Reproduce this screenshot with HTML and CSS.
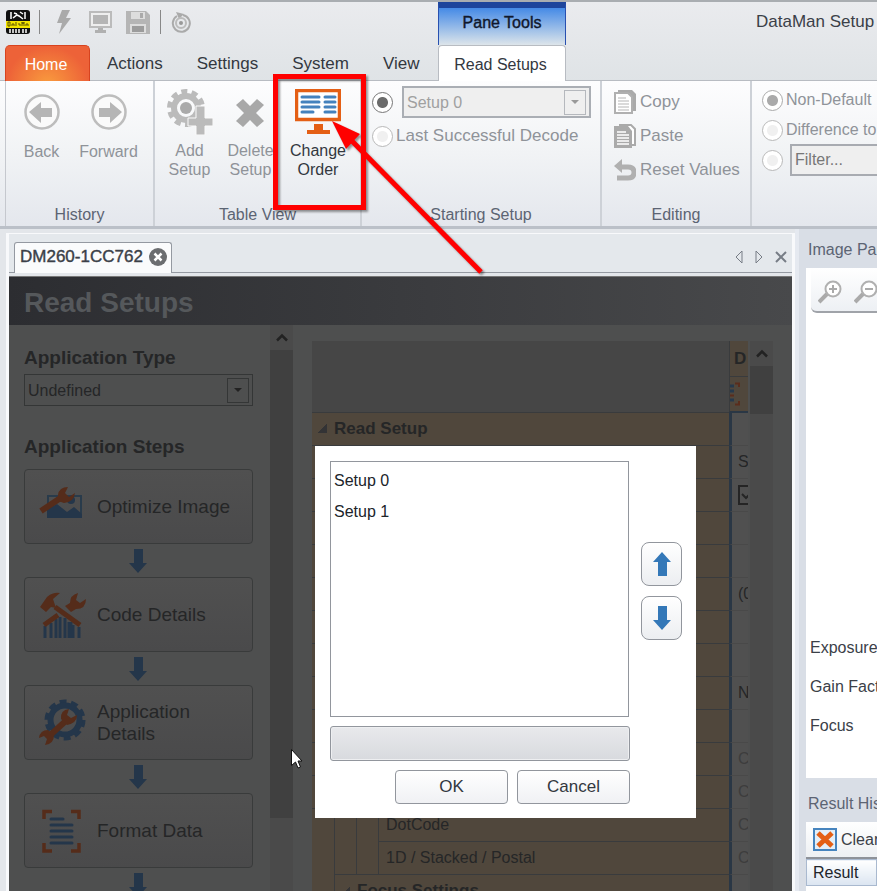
FILE: index.html
```html
<!DOCTYPE html>
<html lang="en">
<head>
    <meta charset="UTF-8">
    <meta name="viewport" content="width=device-width, initial-scale=1.0">
    <title>DataMan Setup</title>
    <link rel="stylesheet" href="styles.css">
</head>
<body>

    <header class="header">
        <div class="header-left">
            <div class="quick-bar">
                <svg class="logo" width="26" height="26" viewBox="0 0 26 26">
                    <rect x="1" y="1" width="24" height="24" rx="3" fill="#111"/>
                    <path d="M6 3v7M20 3v7" stroke="#fff" stroke-width="1.500"/>
                    <path d="M8 9l4-3 2 1 4 3M9 4l3 1M15 3l3 2" stroke="#fff" stroke-width="1.500" fill="none"/>
                    <rect x="1" y="12" width="24" height="7" fill="#f5e400"/>
                    <path d="M3 17v-4h2v4zM7 17v-2h2v2M11 13v4M13 15h2v2M17 17v-4l1 2 1-2v4M21 17v-2h2v2" stroke="#5a5200" fill="none"/>
                    <path d="M5 20v4M8 20v4M11 20v4M14 20v4M18 20v4M21 20v4" stroke="#fff" stroke-width="1.500"/>
                </svg>
                <span class="bar-line"></span>
                <svg class="icon-bolt" width="14" height="24" viewBox="0 0 14 24"><path d="M5 0h8l-4 8h5L2 24l3-11H0z" fill="#aaa"/></svg>
                <svg class="icon-screen" width="23" height="22" viewBox="0 0 23 22"><path d="M1 1h21v15H1z" fill="#eee" stroke="#bbb" stroke-width="2"/><path d="M4 4h15v9H4z" fill="#b5b5b5"/><path d="M9 17h5v2h3v3H6v-3h3z" fill="#b0b0b0"/></svg>
                <svg class="icon-save" width="24" height="23" viewBox="0 0 24 23"><path d="M0 0h20l4 4v19H0z" fill="#b5b5b5"/><path d="M5 1h14v7H5z" fill="#ddd"/><path d="M14 2h3v5h-3z" fill="#aaa"/><path d="M4 13h16v9H4z" fill="#ddd"/><path d="M6 15h12v6H6z" fill="#9c9c9c"/></svg>
                <span class="bar-line"></span>
                <svg class="icon-target" width="20" height="22" viewBox="0 0 20 22"><path d="M6 5a8.500 8.500 0 1 0 6-1" fill="none" stroke="#aaa" stroke-width="2"/><path d="M5 1l8 2-5 5z" fill="#aaa"/><circle cx="10" cy="12" r="5" fill="none" stroke="#bbb" stroke-width="2"/><circle cx="10" cy="12" r="2" fill="#999"/></svg>
            </div>
            <nav class="tabs">
                <a href="#" class="tab home">Home</a>
                <a href="#" class="tab">Actions</a>
                <a href="#" class="tab">Settings</a>
                <a href="#" class="tab">System</a>
                <a href="#" class="tab">View</a>
            </nav>
        </div>
        <div class="context">
            <div class="context-title">Pane Tools</div>
            <a href="#" class="tab active">Read Setups</a>
        </div>
        <div class="app-title">DataMan Setup</div>
    </header>

    <section class="ribbon">
        <div class="group history">
            <div class="group-body">
                <button class="big" disabled>
                    <svg width="36" height="36" viewBox="0 0 36 36"><circle cx="18" cy="18" r="16.500" fill="#fafafa" stroke="#bdbdbd" stroke-width="2.500"/><path d="M5 18L17 8v6h11v9H17v6z" fill="#b5b5b5"/></svg>
                    <span>Back</span>
                </button>
                <button class="big" disabled>
                    <svg width="36" height="36" viewBox="0 0 36 36"><circle cx="18" cy="18" r="16.500" fill="#fafafa" stroke="#bdbdbd" stroke-width="2.500"/><path d="M31 18L19 8v6H8v9h11v6z" fill="#b5b5b5"/></svg>
                    <span>Forward</span>
                </button>
            </div>
            <div class="group-name">History</div>
        </div>
        <div class="group table-view">
            <div class="group-body">
                <button class="big" disabled>
                    <svg width="46" height="46" viewBox="0 0 46 46"><circle cx="19" cy="19" r="16.500" fill="none" stroke="#bbb" stroke-width="5" stroke-dasharray="6 4.370"/><circle cx="19" cy="19" r="12" fill="none" stroke="#bbb" stroke-width="6"/><circle cx="19" cy="19" r="6" fill="#aaa"/><path d="M29 17h9v12h8v8h-8v9h-9v-9h-8v-8h8z" fill="#bbb" stroke="#fafafa"/></svg>
                    <span>Add<br>Setup</span>
                </button>
                <button class="big" disabled>
                    <svg width="46" height="46" viewBox="0 0 46 46"><path d="M15 10l7 7 7-7 7 6-8 8 8 8-7 6-7-7-7 7-7-6 8-8-8-8z" fill="#a8a8a8"/></svg>
                    <span>Delete<br>Setup</span>
                </button>
                <button class="big order">
                    <svg width="46" height="46" viewBox="0 0 46 46"><path d="M1.500 1.500h43v29h-43z" fill="#fff" stroke="#e45f15" stroke-width="3.500"/><path d="M19 35h9v6h7v4H12v-4h7z" fill="#e45f15"/><path d="M7 8h17M7 13h17M7 18h17M7 23h11M30 8h10M30 13h10M30 18h10M30 23h10" stroke="#4482bd" stroke-width="3" stroke-linecap="round"/></svg>
                    <span>Change<br>Order</span>
                </button>
            </div>
            <div class="group-name">Table View</div>
        </div>
        <div class="group starting">
            <div class="group-body">
                <div class="line">
                    <input type="radio" name="start" id="start-setup" aria-label="Setup" checked>
                    <span class="combo">
                        <select aria-label="Starting setup" disabled><option>Setup 0</option></select>
                        <i class="combo-arrow"></i>
                    </span>
                </div>
                <div class="line">
                    <input type="radio" name="start" id="start-last" disabled>
                    <label for="start-last">Last Successful Decode</label>
                </div>
            </div>
            <div class="group-name">Starting Setup</div>
        </div>
        <div class="group editing">
            <div class="group-body">
                <button class="small" disabled>
                    <svg width="22" height="24" viewBox="0 0 22 24"><path d="M4 0h14l4 4v17h-4V7l-3-4H4z" fill="#aaa"/><path d="M1 3h13l4 4v16H1z" fill="#fff" stroke="#b0b0b0" stroke-width="2"/><path d="M4 8h8M4 11h11M4 14h11M4 17h11M4 20h11" stroke="#b5b5b5"/></svg>
                    Copy
                </button>
                <button class="small" disabled>
                    <svg width="22" height="24" viewBox="0 0 22 24"><path d="M5 1h12l4 4v16h-3" fill="#fff" stroke="#aaa" stroke-width="2"/><path d="M0 2h14l4 5v17H0z" fill="#aaa"/><path d="M3 8h9M3 11h12M3 14h12M3 17h12M3 20h12" stroke="#fff" stroke-width="1.500"/></svg>
                    Paste
                </button>
                <button class="small" disabled>
                    <svg width="22" height="24" viewBox="0 0 22 24"><path d="M3 20h11q6 0 6-5.500T14 9H6" fill="none" stroke="#b0b0b0" stroke-width="5"/><path d="M0 8l8-7v14z" fill="#b0b0b0"/></svg>
                    Reset Values
                </button>
            </div>
            <div class="group-name">Editing</div>
        </div>
        <div class="group filter">
            <div class="group-body">
                <div class="line">
                    <input type="radio" name="filter" id="non-default" checked disabled>
                    <label for="non-default">Non-Default</label>
                </div>
                <div class="line">
                    <input type="radio" name="filter" id="difference" disabled>
                    <label for="difference">Difference to</label>
                </div>
                <div class="line">
                    <input type="radio" name="filter" id="by-text" aria-label="Filter by text" disabled>
                    <input type="text" class="filter-text" value="Filter..." aria-label="Filter">
                </div>
            </div>
        </div>
    </section>

    <main class="workspace">
        <section class="pane">
            <div class="doc-tabs">
                <div class="doc-tab">DM260-1CC762
                    <button class="tab-close" aria-label="Close tab"><svg width="18" height="18" viewBox="0 0 18 18"><circle cx="9" cy="9" r="9" fill="#6b6d70"/><path d="M5.500 5.500l7 7M12.500 5.500l-7 7" stroke="#fff" stroke-width="2.500"/></svg></button>
                </div>
                <div class="doc-tools">
                    <button aria-label="Previous"><svg width="8" height="14" viewBox="0 0 8 14"><path d="M7 1v12L1 7z" fill="none" stroke="#777d86"/></svg></button>
                    <button aria-label="Next"><svg width="8" height="14" viewBox="0 0 8 14"><path d="M1 1v12l6-6z" fill="none" stroke="#777d86"/></svg></button>
                    <button aria-label="Close"><svg width="12" height="12" viewBox="0 0 12 12"><path d="M1 1l10 10M11 1L1 11" stroke="#777d86" stroke-width="2"/></svg></button>
                </div>
            </div>
            <div class="doc">
                <h1>Read Setups</h1>
                <div class="doc-body">
                    <aside class="steps">
                        <label class="heading" for="app-type">Application Type</label>
                        <span class="combo dark">
                            <select id="app-type"><option>Undefined</option></select>
                            <i class="combo-arrow"></i>
                        </span>
                        <h2 class="heading">Application Steps</h2>
                        <button class="step">
                            <svg width="48" height="48" viewBox="0 0 48 48"><path d="M9 32V13h33v20H9z" fill="none" stroke="#293b4b" stroke-width="2"/><path d="M8 35v-9l10-5 10 8 7-5 8 7v4z" fill="#24364a"/><circle cx="32" cy="17" r="4" fill="#24364a"/><path d="M2 28L26 12" stroke="#552c1a" stroke-width="6"/><path d="M19 12q1-8 10-8l-3 6 4 4 6-4q-1 9-11 10l-6-2z" fill="#552c1a"/></svg>
                            <span>Optimize Image</span>
                        </button>
                        <svg class="down" width="18" height="24" viewBox="0 0 18 24"><path d="M5 0h9v14h4l-9 10-9-10h5z"/></svg>
                        <button class="step">
                            <svg width="48" height="48" viewBox="0 0 48 48"><path d="M6 35v12M12 32v15M17 28v19M21 26v21M26 27v20M32 31v16M40 36v11" stroke="#24364a" stroke-width="3"/><path d="M30 31v16M34 34v13" stroke="#24364a" stroke-width="3"/><path d="M5 34l14-10M31 16l4-4M16 16l25 18" stroke="#552c1a" stroke-width="5"/><path d="M1 16L8 6q6-5 13-4l-7 6 3 9-5-1-5 5zM26 15l5-3q0-8 8-10l-2 7 4 3 6-4q0 10-10 10l-5 3z" fill="#552c1a"/></svg>
                            <span>Code Details</span>
                        </button>
                        <svg class="down" width="18" height="24" viewBox="0 0 18 24"><path d="M5 0h9v14h4l-9 10-9-10h5z"/></svg>
                        <button class="step">
                            <svg width="48" height="48" viewBox="0 0 48 48"><circle cx="26" cy="21" r="18.500" fill="none" stroke="#24364a" stroke-width="4" stroke-dasharray="7 4.600"/><circle cx="26" cy="21" r="14.500" fill="none" stroke="#24364a" stroke-width="6"/><path d="M8 39l22-20" stroke="#552c1a" stroke-width="6"/><path d="M22 20q-1-9 8-10l-2 6 4 3 6-3q0 8-10 10zM15 36q0 9-9 10l2-6-3-3-5 2q1-8 9-8z" fill="#552c1a"/></svg>
                            <span>Application Details</span>
                        </button>
                        <svg class="down" width="18" height="24" viewBox="0 0 18 24"><path d="M5 0h9v14h4l-9 10-9-10h5z"/></svg>
                        <button class="step">
                            <svg width="48" height="48" viewBox="0 0 48 48"><path d="M5 12V4.500h8M32 4.500h8V12M5 36v8h8M32 44h8v-8" fill="none" stroke="#552c1a" stroke-width="3.500"/><path d="M12 12h12M12 18h21M12 24h21M12 30h21M12 36h21" stroke="#24364a" stroke-width="3" stroke-linecap="round"/></svg>
                            <span>Format Data</span>
                        </button>
                        <svg class="down" width="18" height="24" viewBox="0 0 18 24"><path d="M5 0h9v14h4l-9 10-9-10h5z"/></svg>
                    </aside>
                    <div class="scroll">
                        <svg width="14" height="9" viewBox="0 0 14 9"><path d="M2 7.500l5-5 5 5" fill="none" stroke="#222" stroke-width="2.500"/></svg>
                        <div class="thumb"></div>
                    </div>
                    <div class="grid-area">
                        <table class="grid">
                            <colgroup><col class="indent"><col class="indent"><col class="indent"><col><col class="value"></colgroup>
                            <tr class="top"><td colspan="4" rowspan="2" class="corner"></td><th class="device">D</th></tr>
                            <tr class="top"><th class="device"><svg width="12" height="24" viewBox="0 0 12 24"><path d="M0 4h4M0 9h4M0 18h4" stroke="#26394c" stroke-width="3"/><path d="M0 13.500h4M5 1.500h4V5M5 22.500h4V19" fill="none" stroke="#5a2d1c" stroke-width="2"/></svg></th></tr>
                            <tr><th colspan="4"><i class="tree"></i>Read Setup</th><td></td></tr>
                            <tr><td colspan="4"></td><td>S</td></tr>
                            <tr><td colspan="4"></td><td><svg width="20" height="20" viewBox="0 0 20 20"><path d="M1 1h18v18H1zM4 9l4 4 5-5" fill="none" stroke="#252525" stroke-width="2"/></svg></td></tr>
                            <tr><td colspan="4"></td><td></td></tr>
                            <tr><td colspan="4"></td><td></td></tr>
                            <tr><td colspan="4"></td><td>(0</td></tr>
                            <tr><td colspan="4"></td><td></td></tr>
                            <tr><td colspan="4"></td><td></td></tr>
                            <tr><td colspan="4"></td><td>N</td></tr>
                            <tr><td colspan="4"></td><td></td></tr>
                            <tr><td colspan="4"></td><td class="dim">C</td></tr>
                            <tr><td colspan="4"></td><td class="dim">C</td></tr>
                            <tr class="leaf"><td></td><td></td><td></td><td>DotCode</td><td class="dim">C</td></tr>
                            <tr class="leaf last"><td></td><td></td><td></td><td>1D / Stacked / Postal</td><td class="dim">C</td></tr>
                            <tr><td></td><th colspan="3" class="sub"><i class="tree"></i>Focus Settings</th><td></td></tr>
                        </table>
                        <div class="scroll short">
                            <svg width="14" height="9" viewBox="0 0 14 9"><path d="M2 7.500l5-5 5 5" fill="none" stroke="#222" stroke-width="2.500"/></svg>
                            <div class="thumb"></div>
                        </div>
                    </div>
                </div>

                <div class="dialog" role="dialog" aria-label="Change Order">
                    <div class="dialog-main">
                        <select class="setup-list" size="2" aria-label="Setups">
                            <option>Setup 0</option>
                            <option>Setup 1</option>
                        </select>
                        <div class="move">
                            <button aria-label="Move up"><svg width="18" height="24" viewBox="0 0 18 24"><path d="M5 24h9V10h4L9 0 0 10h5z" fill="#3478b8"/></svg></button>
                            <button aria-label="Move down"><svg width="18" height="24" viewBox="0 0 18 24"><path d="M5 0h9v14h4L9 24 0 14h5z" fill="#3478b8"/></svg></button>
                        </div>
                    </div>
                    <input type="text" class="setup-name" aria-label="Setup name" disabled>
                    <div class="dialog-buttons">
                        <button>OK</button>
                        <button>Cancel</button>
                    </div>
                </div>
            </div>
        </section>

        <aside class="side">
            <h3>Image Pane</h3>
            <div class="image-box">
                <div class="zoom-bar">
                    <button aria-label="Zoom in"><svg width="24" height="24" viewBox="0 0 24 24"><path d="M1 22l8-8" stroke="#aaa" stroke-width="4"/><circle cx="15" cy="9" r="7.500" fill="#fff" stroke="#b0b0b0" stroke-width="2"/><path d="M11 9h8M15 5v8" stroke="#aaa" stroke-width="2"/></svg></button>
                    <button aria-label="Zoom out"><svg width="24" height="24" viewBox="0 0 24 24"><path d="M1 22l8-8" stroke="#aaa" stroke-width="4"/><circle cx="15" cy="9" r="7.500" fill="#fff" stroke="#b0b0b0" stroke-width="2"/><path d="M11 9h8" stroke="#aaa" stroke-width="2"/></svg></button>
                </div>
                <div class="image-info">
                    <p>Exposure</p>
                    <p>Gain Factor</p>
                    <p>Focus</p>
                </div>
            </div>
            <h3>Result History</h3>
            <div class="result-box">
                <button class="clear"><svg width="24" height="23" viewBox="0 0 24 23"><path d="M1 1h22v21H1z" fill="#e4eef7" stroke="#4684be" stroke-width="2"/><path d="M5 5l14 13M19 5L5 18" stroke="#e45f15" stroke-width="5"/></svg>Clear</button>
                <table class="results"><tr><th>Result</th></tr></table>
            </div>
        </aside>
    </main>

    <svg class="mark" width="490" height="280" viewBox="0 0 490 280">
        <g class="mark-shapes">
            <rect x="275.500" y="76.500" width="88" height="131" fill="none" stroke="#f00" stroke-width="5"/>
            <path d="M350 139L481 272" stroke="#f00" stroke-width="5"/>
            <path d="M332 121l28 13-14 15z" fill="#f00"/>
        </g>
    </svg>
    <svg class="cursor" width="12" height="20" viewBox="0 0 12 20"><path d="M.5.500v16l4-3.500 2.500 6 2.500-1-2.500-6H11z" fill="#fff" stroke="#111"/></svg>

</body>
</html>
```
FILE: styles.css
```css
* {
    box-sizing: border-box;
}
body {
    margin: 0;
    height: 100vh;
    display: flex;
    flex-direction: column;
    overflow: hidden;
    position: relative;
    font: 16px "Liberation Sans", Arial, sans-serif;
    color: #3b4048;
    background: #e3e6ea;
}
button, select, input {
    font: inherit;
    color: inherit;
}
button {
    padding: 0;
    border: 0;
    background: none;
}
svg {
    flex: none;
}

/* title bar and tabs */
.header {
    display: flex;
    height: 81px;
    flex: none;
    border-top: 2px solid #a9adb1;
    background: linear-gradient(#eaebee, #dfe3e6);
}
.header-left, .context {
    display: flex;
    flex-direction: column;
    flex: none;
}
.header-left {
    width: 438px;
}
.quick-bar {
    display: flex;
    align-items: center;
    height: 43px;
    padding: 0 5px 3px;
}
.bar-line {
    width: 1px;
    height: 24px;
    background: #888;
    margin: 0 8px;
}
.icon-bolt {
    margin: 0 18px 0 9px;
}
.icon-save {
    margin: 0 2px 0 14px;
}
.icon-target {
    margin-left: 2px;
}
.tabs {
    display: flex;
    height: 36px;
    padding-left: 5px;
    border-bottom: 1px solid #b8bcc2;
}
.tab {
    height: 36px;
    padding: 0 17px;
    line-height: 37px;
    font-size: 17px;
    color: #33383f;
    text-decoration: none;
}
.tab.home {
    width: 85px;
    padding: 0 3px 0 0;
    text-align: center;
    font-size: 16px;
    color: #fff;
    border: 1px solid #d7431f;
    border-bottom: 0;
    border-radius: 5px 5px 0 0;
    background: radial-gradient(ellipse at 50% 110%, #f99c3e, #ed6238 70%);
}
.context {
    width: 128px;
}
.context-title {
    height: 43px;
    text-align: center;
    line-height: 30px;
    color: #10182c;
    -webkit-text-stroke: 0.4px #10182c;
    border: 1px solid #2850b0;
    border-top: 6px solid #1e459c;
    border-bottom: 0;
    background: linear-gradient(#458ae6, #dde5ea);
}
.tab.active {
    padding: 0 3px 0 0;
    text-align: center;
    font-size: 16px;
    background: #fff;
    border: 1px solid #b8bcc2;
    border-bottom: 0;
    border-radius: 4px 4px 0 0;
}
.app-title {
    flex: 1;
    padding: 8px 0 0 190px;
    font-size: 17px;
    line-height: 24px;
    white-space: nowrap;
    overflow: hidden;
    border-bottom: 1px solid #b8bcc2;
}

/* ribbon */
.ribbon {
    display: flex;
    flex: none;
    height: 148px;
    padding-left: 5px;
    border-bottom: 3px solid #bbc0c8;
    background: linear-gradient(#fdfdfe, #f1f3f5 50%, #e4e7ed);
}
.group {
    display: flex;
    flex-direction: column;
    flex: none;
    border-right: 2px solid #cdd1d7;
    color: #8f9399;
}
.group:first-child {
    border-left: 1px solid #c5c8ce;
}
.group-body {
    flex: 1;
}
.group-name {
    height: 23px;
    text-align: center;
    color: #5c6473;
    line-height: 24px;
}
.history {
    width: 150px;
}
.table-view {
    width: 207px;
}
.starting {
    width: 240px;
}
.editing {
    width: 150px;
}
.filter {
    flex: 1;
    overflow: hidden;
    border: 0;
}
.history .group-body, .table-view .group-body {
    display: flex;
    padding-top: 8px;
}
.history .group-body {
    gap: 6px;
    padding: 13px 0 0 5px;
}
.big {
    display: flex;
    flex-direction: column;
    align-items: center;
    width: 61px;
    line-height: 19px;
}
.history .big {
    gap: 12px;
    line-height: 20px;
}
.table-view .group-body {
    padding-left: 4px;
}
.table-view .big {
    gap: 6px;
}
.table-view .order {
    width: 74px;
    color: #33383f;
}
.line {
    display: flex;
    align-items: center;
    height: 34px;
    padding-left: 10px;
}
.starting .group-body {
    padding-top: 4px;
}
.line label {
    font-size: 17px;
    white-space: nowrap;
    margin-left: 3px;
}
input[type="radio"] {
    appearance: none;
    flex: none;
    width: 21px;
    height: 21px;
    margin: 0;
    border: 1px solid #b9b9b9;
    border-radius: 50%;
    background: radial-gradient(#f0f0f0 5px, #fff 6px);
}
input[type="radio"]:checked {
    border-color: #777;
    background: radial-gradient(#6b6b6b 5px, #fff 6px);
}
input[type="radio"]:checked:disabled {
    border-color: #aaa;
    background: radial-gradient(#aaa 5px, #fff 6px);
}
.combo {
    display: flex;
    align-items: center;
    width: 189px;
    height: 32px;
    margin-left: 9px;
    padding-right: 3px;
    border: 2px solid #aaaeb4;
    background: #efefef;
}
.combo select {
    appearance: none;
    flex: 1;
    height: 100%;
    padding: 0 3px;
    border: 0;
    background: none;
    opacity: 1;
    color: #a0a0a0;
}
.combo-arrow {
    display: flex;
    align-items: center;
    justify-content: center;
    width: 22px;
    height: 25px;
    border: 1px solid #b5b8bd;
}
.combo-arrow::after {
    content: "";
    border: 4px solid transparent;
    border-top-color: #999;
    border-bottom: 0;
}
.starting .line .combo {
    margin-right: 8px;
}
.editing .group-body {
    padding: 4px 0 0 12px;
}
.small {
    display: flex;
    align-items: center;
    gap: 4px;
    height: 34px;
    font-size: 17px;
    white-space: nowrap;
}
.filter .group-body {
    padding-top: 4px;
}
.filter .line {
    height: 30px;
}
.filter .line label {
    font-size: 16px;
}
.filter-text {
    width: 190px;
    height: 32px;
    margin-left: 7px;
    padding: 0 3px;
    border: 2px solid #a8abb1;
    background: #efefef;
    color: #777;
}

/* workspace */
.workspace {
    display: flex;
    flex: 1;
    min-height: 0;
    padding: 4px 0 0 6px;
    background: #e3e6ea;
}
.pane {
    display: flex;
    flex-direction: column;
    flex: 1;
    min-width: 0;
    border: solid #f8f9fb;
    border-width: 1px 3px 0;
}
.doc-tabs {
    display: flex;
    justify-content: space-between;
    align-items: flex-end;
    height: 39px;
    flex: none;
    padding: 0 5px;
    border-bottom: 1px solid #9499a1;
    background: #e4e8ec;
}
.doc-tab {
    display: flex;
    align-items: center;
    gap: 6px;
    height: 31px;
    margin-bottom: -1px;
    padding: 0 4px 2px 5px;
    font-size: 17px;
    border: 1px solid #9499a1;
    border-bottom: 0;
    border-radius: 3px 3px 0 0;
    background: #fafbfc;
    -webkit-text-stroke: 0.4px #3b4048;
}
.tab-close {
    display: flex;
}
.doc-tools {
    display: flex;
    align-items: center;
    gap: 12px;
    height: 30px;
}
.doc-tools button {
    display: flex;
}
.doc {
    position: relative;
    display: flex;
    flex-direction: column;
    flex: 1;
    min-height: 0;
    margin-top: 3px;
    border-top: 1px solid #777;
    background: #4e4f4f;
    color: #252627;
}
h1 {
    height: 48px;
    flex: none;
    margin: 0;
    padding-left: 15px;
    font-size: 28px;
    line-height: 51px;
    color: #55585b;
    background: linear-gradient(90deg, #2c2d31, #48494b);
}
.doc-body {
    display: flex;
    flex: 1;
    min-height: 0;
    overflow: hidden;
}
.steps {
    display: flex;
    flex-direction: column;
    flex: none;
    width: 244px;
    margin-right: 17px;
    padding: 21px 0 0 15px;
}
.heading {
    margin: 0;
    font-size: 19px;
    font-weight: bold;
    line-height: 24px;
}
.steps h2 {
    margin: 29px 0 10px;
}
.combo.dark {
    flex: none;
    width: 229px;
    margin: 4px 0 0;
    border: 1px solid #343636;
    background: none;
}
.combo.dark select {
    color: #252627;
}
.combo.dark .combo-arrow {
    border-color: #343636;
}
.combo.dark .combo-arrow::after {
    border-top-color: #222;
}
.step {
    display: flex;
    align-items: center;
    flex: none;
    gap: 10px;
    height: 75px;
    padding-left: 14px;
    border: 1px solid #393b3b;
    border-radius: 4px;
    font-size: 19px;
    line-height: 22px;
    text-align: left;
    background: linear-gradient(#505050, #4a4a4b);
}
.down {
    margin: 5px 0 4px 105px;
    fill: #24364a;
}
.scroll {
    flex: none;
    width: 23px;
    background: #4a4a4a;
    text-align: center;
}
.scroll svg {
    display: block;
    margin: 8px auto;
}
.scroll .thumb {
    height: 468px;
    background: #404040;
}
.scroll.short {
    align-self: stretch;
    margin-left: 2px;
}
.scroll.short .thumb {
    height: 48px;
}
.grid-area {
    display: flex;
    align-items: flex-start;
    flex: 1;
    min-width: 0;
    padding: 16px 19px 0;
}
.grid {
    table-layout: fixed;
    flex: 1;
    width: 100%;
    min-width: 0;
    border-collapse: separate;
    border-spacing: 0;
}
.indent {
    width: 22px;
}
.value {
    width: 19px;
}
.grid tr {
    height: 33px;
}
.grid tr.top {
    height: 36px;
}
.grid td, .grid th {
    padding: 0;
    overflow: hidden;
    white-space: nowrap;
    text-align: left;
    border-bottom: 1px solid #393b3d;
    background: #50473c;
}
.grid th {
    font-size: 17px;
}
.grid td:last-child {
    padding-left: 6px;
    border-left: 3px solid #2a3745;
    border-bottom-color: #494949;
    background: #505050;
}
.grid td.corner {
    padding: 0;
    border: 0;
    border-bottom: 1px solid #393b3d;
    background: #464646;
}
.grid .device {
    border-left: 1px solid #393b3d;
    padding-left: 4px;
}
.grid tr.top + tr.top .device {
    padding-left: 0;
    border-bottom: 2px solid #2a3745;
}
.grid th svg, .grid td svg {
    display: block;
}
.grid .dim {
    color: #3d3d3d;
}
.leaf td, .grid .sub {
    border-left: 1px solid #393b3d;
}
.grid .leaf td:first-child {
    border-left: 0;
}
.grid .leaf td:nth-child(-n+3) {
    border-bottom: 0;
}
.grid .last td:nth-child(2), .grid .last td:nth-child(3) {
    border-bottom: 1px solid #393b3d;
}
.grid .leaf td:nth-child(4) {
    padding-left: 7px;
}
.tree {
    display: inline-block;
    width: 9px;
    height: 9px;
    margin: 0 7px 1px 6px;
    background: linear-gradient(135deg, transparent 50%, #333335 50%);
}

/* order dialog */
.dialog {
    position: absolute;
    left: 306px;
    top: 169px;
    width: 381px;
    padding: 15px 14px 14px 15px;
    background: #fff;
    color: #33383f;
}
.dialog-main {
    display: flex;
    gap: 12px;
}
.setup-list {
    width: 300px;
    height: 256px;
    padding: 4px 2px;
    border: 1px solid #92969d;
    border-radius: 0;
    outline: 0;
    color: #20242a;
    background: #fff;
    overflow: hidden;
}
.setup-list option {
    height: 31px;
    padding: 6px 1px;
}
.move {
    display: flex;
    flex-direction: column;
    gap: 10px;
    padding-top: 81px;
}
.move button {
    display: flex;
    align-items: center;
    justify-content: center;
    width: 41px;
    height: 44px;
    border: 1px solid #92969d;
    border-radius: 8px;
    background: linear-gradient(#fff, #eceef1);
}
.setup-name {
    display: block;
    width: 300px;
    height: 35px;
    margin: 9px 0;
    border: 1px solid #92969d;
    border-radius: 3px;
    background: linear-gradient(#e8e9ec, #d8dade);
    box-shadow: inset 0 0 0 1px #eeeff1;
}
.dialog-buttons {
    display: flex;
    justify-content: flex-end;
    gap: 9px;
    width: 300px;
}
.dialog-buttons button {
    width: 113px;
    height: 34px;
    font-size: 17px;
    border: 1px solid #92969d;
    border-radius: 4px;
    background: linear-gradient(#fff, #f0f1f4);
}

/* right side */
.side {
    display: flex;
    flex-direction: column;
    flex: none;
    width: 82px;
    margin-top: -4px;
    padding: 5px 0 0 7px;
    border-left: 4px solid #e5e9f0;
    overflow: hidden;
    white-space: nowrap;
    background: #d9dee6;
}
h3 {
    height: 34px;
    flex: none;
    margin: 0;
    padding-left: 2px;
    font-size: 16px;
    font-weight: normal;
    line-height: 32px;
    color: #5c6473;
}
.image-box {
    display: flex;
    flex-direction: column;
    justify-content: space-between;
    height: 510px;
    flex: none;
    margin-bottom: 10px;
    background: #fff;
}
.zoom-bar {
    display: flex;
    gap: 12px;
    height: 45px;
    margin-left: 5px;
    padding: 12px 0 0 7px;
    border-bottom: 2px solid #a0a3a9;
    border-radius: 0 0 0 6px;
    background: linear-gradient(#fff, #edf0f4);
}
.zoom-bar button {
    display: flex;
}
.image-info {
    padding: 0 0 33px 4px;
}
.image-info p {
    margin: 0;
    line-height: 39px;
}
.result-box {
    flex: 1;
    background: #fff;
}
.clear {
    display: flex;
    align-items: center;
    gap: 4px;
    width: 100%;
    height: 37px;
    padding-left: 7px;
    border-bottom: 2px solid #8e9299;
    background: linear-gradient(#fff, #edf0f3);
}
.results {
    width: 100%;
    border-collapse: collapse;
}
.results th {
    height: 26px;
    padding: 0 6px;
    font-weight: normal;
    text-align: left;
    color: #20242a;
    border: 1px solid #a9b9cf;
    background: linear-gradient(#fff, #dbe5f1);
}

/* arrow and frame drawn over the window */
.mark {
    position: absolute;
    left: 0;
    top: 0;
    pointer-events: none;
}
.mark-shapes {
    filter: drop-shadow(2px 2px 1px rgba(0, 0, 0, 0.4));
}
.cursor {
    position: absolute;
    left: 291px;
    top: 749px;
}
```
